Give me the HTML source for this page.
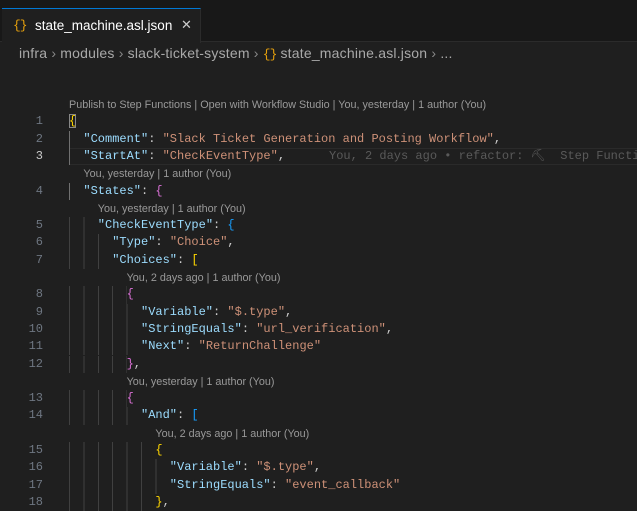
<!DOCTYPE html>
<html><head><meta charset="utf-8"><style>
*{margin:0;padding:0;box-sizing:border-box}
body{width:637px;height:506px;background:#1f1f1f;overflow:hidden;position:relative;font-family:"Liberation Sans",sans-serif}
.top{position:absolute;left:0;top:0;width:637px;height:8px;background:#181818}
.tabbar{position:absolute;left:0;top:8px;width:637px;height:34px;background:#181818;border-bottom:1px solid #2b2b2b}
.tab{position:absolute;left:2px;top:0;width:199px;height:35px;background:#1f1f1f;border-top:1px solid #0078d4;border-right:1px solid #2b2b2b;color:#fff;font-size:13.5px}
.tab .ic{position:absolute;left:11px;top:9px;color:#e5a00d;font-family:"Liberation Mono",monospace;font-size:13px;letter-spacing:-1px}
.tab .nm{position:absolute;left:33px;top:9px}
.tab .x{position:absolute;left:179px;top:8px;color:#ccc;font-size:13px}
.bc{position:absolute;left:19px;top:45px;color:#a9a9a9;font-size:14px;letter-spacing:0.2px;white-space:pre}
.bc .ic{color:#e5a00d;font-family:"Liberation Mono",monospace;font-size:13px;letter-spacing:-1px}
.bc .s{color:#8a8a8a}
.r{position:absolute;left:0;width:637px;height:17.3px;white-space:pre}
.ln{position:absolute;right:594px;top:0;font-family:"Liberation Mono",monospace;font-size:12px;line-height:17.3px;color:#6e7681}
.g{position:absolute;top:0;height:17.3px;left:69px;background:repeating-linear-gradient(to right,#404040 0 1px,transparent 1px 14.4px)}
.c{position:absolute;top:0;font-family:"Liberation Mono",monospace;font-size:12px;line-height:17.3px;color:#cccccc}
.lens{position:absolute;top:2px;font-size:10.8px;color:#999;line-height:14px}
.k{color:#9cdcfe}.s1{color:#ce9178}.y{color:#ffd700}.p{color:#da70d6}.b{color:#179fff}
</style></head><body>
<div class="top"></div>
<div class="tabbar"><div class="tab"><span class="ic">{}</span><span class="nm">state_machine.asl.json</span><span class="x">✕</span></div></div>
<div class="bc">infra <span class="s">›</span> modules <span class="s">›</span> slack-ticket-system <span class="s">›</span> <span class="ic">{}</span> state_machine.asl.json <span class="s">›</span> ...</div>

<div class="r" style="top:96px"><span class="lens" style="left:69px">Publish to Step Functions | Open with Workflow Studio | You, yesterday | 1 author (You)</span></div>
<div class="r" style="top:113.3px"><span class="ln">1</span><span class="c" style="left:69px"><span class="y" style="outline:1px solid #888;outline-offset:-1px">{</span></span></div>
<div class="r" style="top:130.6px"><span class="ln">2</span><div class="g" style="width:1px;background:#707070"></div><span class="c" style="left:83.4px"><span class="k">"Comment"</span>: <span class="s1">"Slack Ticket Generation and Posting Workflow"</span>,</span></div>
<div class="r" style="top:147.9px;border-top:1px solid #2a2a2a;border-bottom:1px solid #2a2a2a;left:69px;width:568px"></div>
<div class="r" style="top:147.9px"><span class="ln" style="color:#ccc">3</span><div class="g" style="width:1px;background:#707070"></div><span class="c" style="left:83.4px"><span class="k">"StartAt"</span>: <span class="s1">"CheckEventType"</span>,</span><span class="c" style="left:329px;color:#5a5a5a">You, 2 days ago • refactor: ⛏  Step Functions</span></div>
<div class="r" style="top:165.2px"><span class="lens" style="left:83.4px">You, yesterday | 1 author (You)</span></div>
<div class="r" style="top:182.5px"><span class="ln">4</span><div class="g" style="width:1px;background:#707070"></div><span class="c" style="left:83.4px"><span class="k">"States"</span>: <span class="p">{</span></span></div>
<div class="r" style="top:199.8px"><span class="lens" style="left:97.8px">You, yesterday | 1 author (You)</span></div>
<div class="r" style="top:217.1px"><span class="ln">5</span><div class="g" style="width:28.8px"></div><span class="c" style="left:97.8px"><span class="k">"CheckEventType"</span>: <span class="b">{</span></span></div>
<div class="r" style="top:234.4px"><span class="ln">6</span><div class="g" style="width:43.2px"></div><span class="c" style="left:112.2px"><span class="k">"Type"</span>: <span class="s1">"Choice"</span>,</span></div>
<div class="r" style="top:251.7px"><span class="ln">7</span><div class="g" style="width:43.2px"></div><span class="c" style="left:112.2px"><span class="k">"Choices"</span>: <span class="y">[</span></span></div>
<div class="r" style="top:269px"><span class="lens" style="left:126.6px">You, 2 days ago | 1 author (You)</span></div>
<div class="r" style="top:286.3px"><span class="ln">8</span><div class="g" style="width:57.6px"></div><span class="c" style="left:126.6px"><span class="p">{</span></span></div>
<div class="r" style="top:303.6px"><span class="ln">9</span><div class="g" style="width:72px"></div><span class="c" style="left:141px"><span class="k">"Variable"</span>: <span class="s1">"$.type"</span>,</span></div>
<div class="r" style="top:320.9px"><span class="ln">10</span><div class="g" style="width:72px"></div><span class="c" style="left:141px"><span class="k">"StringEquals"</span>: <span class="s1">"url_verification"</span>,</span></div>
<div class="r" style="top:338.2px"><span class="ln">11</span><div class="g" style="width:72px"></div><span class="c" style="left:141px"><span class="k">"Next"</span>: <span class="s1">"ReturnChallenge"</span></span></div>
<div class="r" style="top:355.5px"><span class="ln">12</span><div class="g" style="width:57.6px"></div><span class="c" style="left:126.6px"><span class="p">}</span>,</span></div>
<div class="r" style="top:372.8px"><span class="lens" style="left:126.6px">You, yesterday | 1 author (You)</span></div>
<div class="r" style="top:390.1px"><span class="ln">13</span><div class="g" style="width:57.6px"></div><span class="c" style="left:126.6px"><span class="p">{</span></span></div>
<div class="r" style="top:407.4px"><span class="ln">14</span><div class="g" style="width:72px"></div><span class="c" style="left:141px"><span class="k">"And"</span>: <span class="b">[</span></span></div>
<div class="r" style="top:424.7px"><span class="lens" style="left:155.4px">You, 2 days ago | 1 author (You)</span></div>
<div class="r" style="top:442px"><span class="ln">15</span><div class="g" style="width:86.4px"></div><span class="c" style="left:155.4px"><span class="y">{</span></span></div>
<div class="r" style="top:459.3px"><span class="ln">16</span><div class="g" style="width:100.8px"></div><span class="c" style="left:169.8px"><span class="k">"Variable"</span>: <span class="s1">"$.type"</span>,</span></div>
<div class="r" style="top:476.6px"><span class="ln">17</span><div class="g" style="width:100.8px"></div><span class="c" style="left:169.8px"><span class="k">"StringEquals"</span>: <span class="s1">"event_callback"</span></span></div>
<div class="r" style="top:493.9px"><span class="ln">18</span><div class="g" style="width:86.4px"></div><span class="c" style="left:155.4px"><span class="y">}</span>,</span></div>
</body></html>
